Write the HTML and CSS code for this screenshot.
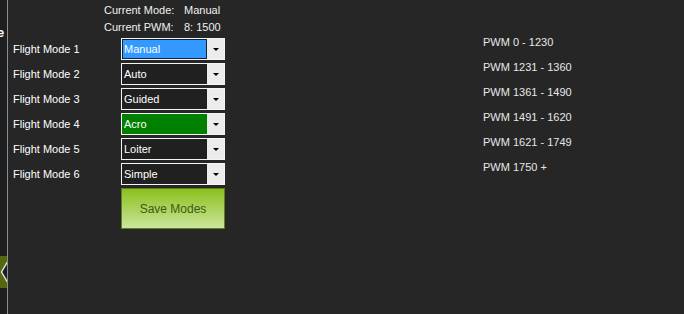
FILE: index.html
```html
<!DOCTYPE html>
<html>
<head>
<meta charset="utf-8">
<link rel="stylesheet" href="styles.css">
</head>
<body>
<div class="page">
  <div class="side">
    <span class="clip">e</span>
    <div class="tab">
      <svg width="8" height="32" viewBox="0 0 8 32">
        <polygon points="0,0 8,0 8,4 1,16 8,28 8,32 0,32" fill="#56680f"/>
        <polyline points="8,5 1.5,16 8,27" fill="none" stroke="#e8e8e8" stroke-width="1.4"/>
      </svg>
    </div>
  </div>
  <div class="content">
    <div class="left">
      <div class="status">
        <div class="srow"><span class="sk">Current Mode:</span><span>Manual</span></div>
        <div class="srow"><span class="sk">Current PWM:</span><span>8: 1500</span></div>
      </div>
      <div class="modes">
        <div class="row"><span class="lbl">Flight Mode 1</span><div class="combo sel"><span class="val">Manual</span><span class="btn"><i></i></span></div></div>
        <div class="row"><span class="lbl">Flight Mode 2</span><div class="combo"><span class="val">Auto</span><span class="btn"><i></i></span></div></div>
        <div class="row"><span class="lbl">Flight Mode 3</span><div class="combo"><span class="val">Guided</span><span class="btn"><i></i></span></div></div>
        <div class="row"><span class="lbl">Flight Mode 4</span><div class="combo green"><span class="val">Acro</span><span class="btn"><i></i></span></div></div>
        <div class="row"><span class="lbl">Flight Mode 5</span><div class="combo"><span class="val">Loiter</span><span class="btn"><i></i></span></div></div>
        <div class="row"><span class="lbl">Flight Mode 6</span><div class="combo"><span class="val">Simple</span><span class="btn"><i></i></span></div></div>
        <div class="row"><span class="lbl"></span><button class="save">Save Modes</button></div>
      </div>
    </div>
    <div class="pwm">
      <div>PWM 0 - 1230</div>
      <div>PWM 1231 - 1360</div>
      <div>PWM 1361 - 1490</div>
      <div>PWM 1491 - 1620</div>
      <div>PWM 1621 - 1749</div>
      <div>PWM 1750 +</div>
    </div>
  </div>
</div>
</body>
</html>
```
FILE: styles.css
```css
html, body {
  margin: 0;
  padding: 0;
}
body {
  background: #262626;
  font-family: "Liberation Sans", Arial, sans-serif;
  font-size: 11px;
  color: #ffffff;
  width: 684px;
  height: 314px;
  overflow: hidden;
}
.page {
  display: flex;
  height: 314px;
}
.side {
  position: relative;
  width: 7px;
  background: #1d1e20;
  border-right: 1px solid #8e8e8e;
  overflow: hidden;
  flex: none;
}
.clip {
  position: absolute;
  left: -3px;
  top: 25px;
  font-size: 13px;
  font-weight: bold;
  color: #ffffff;
}
.tab {
  position: absolute;
  left: 0;
  top: 256px;
  width: 8px;
  height: 32px;
  line-height: 0;
}
.content {
  display: flex;
  flex: 1;
}
.left {
  width: 475px;
  flex: none;
}
.status {
  padding: 3px 0 0 96px;
  height: 38px;
  box-sizing: border-box;
}
.srow {
  display: flex;
  height: 17px;
  line-height: 14px;
  color: #f0f0f0;
}
.sk {
  width: 80px;
}
.modes {
  display: flex;
  flex-direction: column;
  gap: 3px;
  padding-left: 5px;
}
.row {
  display: flex;
  align-items: center;
  height: 22px;
}
.lbl {
  width: 108px;
}
.combo {
  display: flex;
  width: 104px;
  height: 22px;
  box-sizing: border-box;
  border: 1px solid #f4f4f4;
  background: #202020;
}
.val {
  flex: 1;
  line-height: 20px;
  padding-left: 2px;
  color: #ffffff;
}
.sel .val {
  background: #3399ff;
  border: 1px solid #10243c;
  line-height: 18px;
  padding-left: 1px;
}
.green {
  background: #008000;
}
.btn {
  width: 17px;
  background: #ececec;
  display: flex;
  align-items: center;
  justify-content: center;
}
.btn i {
  width: 0;
  height: 0;
  border-left: 3px solid transparent;
  border-right: 3px solid transparent;
  border-top: 3px solid #000;
  margin-top: 1px;
}
.save {
  margin-top: 19px;
  width: 104px;
  height: 41px;
  border: 1px solid #5f7d22;
  background: linear-gradient(#8bc01c, #cbe59c);
  color: #3f5a10;
  font-family: "Liberation Sans", Arial, sans-serif;
  font-size: 12px;
  padding: 0;
}
.pwm {
  padding-top: 35px;
  color: #e6e6e6;
  font-size: 11px;
}
.pwm div {
  height: 25px;
  line-height: 15px;
}
```
